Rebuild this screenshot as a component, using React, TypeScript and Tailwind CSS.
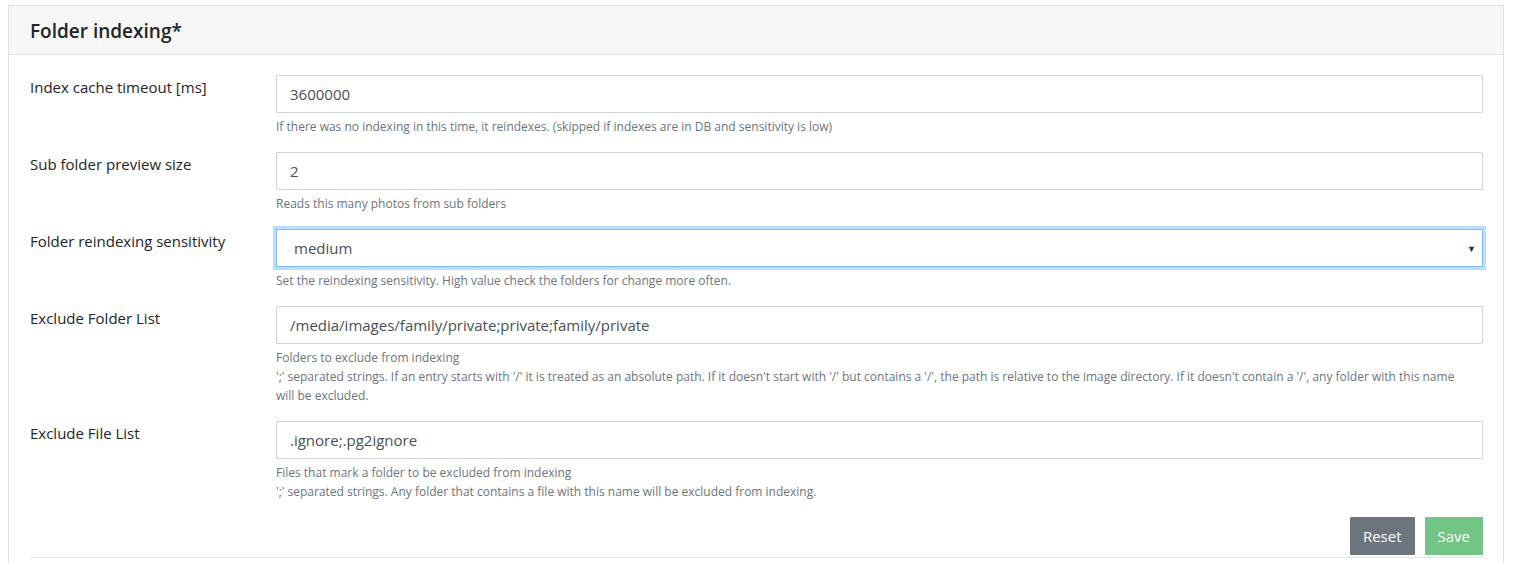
import { ReactNode } from "react";

const font = { fontFamily: '"Segoe UI", "Open Sans", "Liberation Sans", sans-serif' };

function Row({ label, children, help }: { label: string; children: ReactNode; help: ReactNode }) {
  return (
    <div className="mb-4 flex">
      <label className="w-[246px] shrink-0 text-[15px] leading-6 text-[#212529]">{label}</label>
      <div className="flex-1">
        {children}
        <div className="mt-1 text-[12px] leading-[19px] text-[#6c757d]">{help}</div>
      </div>
    </div>
  );
}

function TextInput({ value }: { value: string }) {
  return (
    <div className="flex h-[38px] items-center rounded-[1px] border border-[#ced4da] bg-white px-[13px] text-[15px] text-[#495057]">
      {value}
    </div>
  );
}

export default function App() {
  return (
    <div className="min-h-screen bg-white pl-2 pt-[5px]" style={font}>
      <div className="w-[1496px] border border-[#dfdfdf]">
        {/* header */}
        <div className="flex h-[49px] items-center border-b border-[#dfdfdf] bg-[#f7f7f7] pl-[21px] pr-5 pt-[2px]">
          <h5 className="text-[19px] font-semibold text-[#212529]">Folder indexing*</h5>
        </div>

        <div className="pl-[21px] pr-5 pt-5">
          <Row
            label="Index cache timeout [ms]"
            help="If there was no indexing in this time, it reindexes. (skipped if indexes are in DB and sensitivity is low)"
          >
            <TextInput value="3600000" />
          </Row>

          <Row label="Sub folder preview size" help="Reads this many photos from sub folders">
            <TextInput value="2" />
          </Row>

          <Row
            label="Folder reindexing sensitivity"
            help="Set the reindexing sensitivity. High value check the folders for change more often."
          >
            <div className="relative flex h-[38px] items-center border border-[#80bdff] bg-white pl-[17px] text-[15px] text-[#495057] shadow-[0_0_0_3px_rgba(0,123,255,0.25)]">
              medium
              <span className="absolute right-[6px] top-[12px] text-[9px] text-[#333]">▼</span>
            </div>
          </Row>

          <Row
            label="Exclude Folder List"
            help={
              <>
                <div>Folders to exclude from indexing</div>
                <div>
                  ';' separated strings. If an entry starts with '/' it is treated as an absolute path. If it doesn't start with '/' but contains a '/', the path is relative to the image directory. If it doesn't contain a '/', any folder with this name
                  <br />
                  will be excluded.
                </div>
              </>
            }
          >
            <TextInput value="/media/images/family/private;private;family/private" />
          </Row>

          <Row
            label="Exclude File List"
            help={
              <>
                <div>Files that mark a folder to be excluded from indexing</div>
                <div>';' separated strings. Any folder that contains a file with this name will be excluded from indexing.</div>
              </>
            }
          >
            <TextInput value=".ignore;.pg2ignore" />
          </Row>

          <div className="flex justify-end gap-[10px]">
            <button className="h-[38px] rounded-[1px] bg-[#6c757d] px-[13px] text-[15px] text-white">Reset</button>
            <button className="h-[38px] rounded-[1px] bg-[#28a745] px-[13px] text-[15px] text-white opacity-[0.65]">Save</button>
          </div>
          <div className="mt-[2px] border-t border-[#e5e5e5]" />
          <div className="h-10" />
        </div>
      </div>
    </div>
  );
}
